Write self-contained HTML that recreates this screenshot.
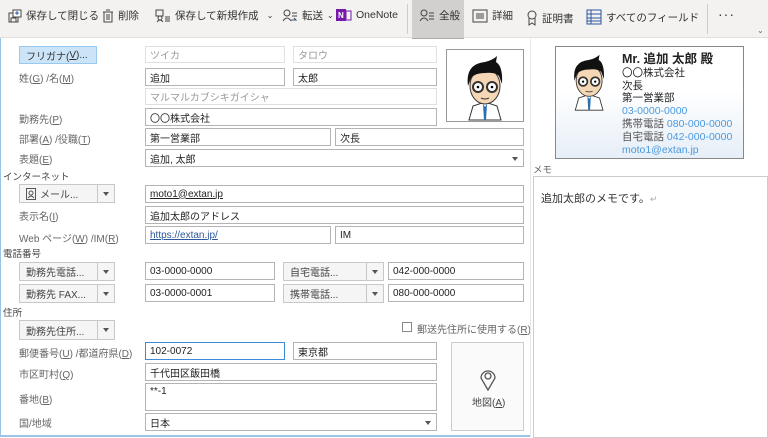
<!DOCTYPE html>
<html><head><meta charset="utf-8">
<style>
*{box-sizing:border-box;margin:0;padding:0}
body{width:768px;height:437px;overflow:hidden;background:#fff;font-family:"Liberation Sans","Noto Sans CJK JP",sans-serif;font-size:10px;color:#222;position:relative}
.a{position:absolute;white-space:nowrap}
.tb{position:absolute;left:0;top:0;width:768px;height:38px;background:#f3f2f1;border-bottom:1px solid #e1dfdd}
.ti{position:absolute;top:8px;font-size:10.5px;color:#333;display:flex;align-items:center;gap:4px}
.lab{position:absolute;color:#666;font-size:10px;white-space:nowrap}
.f{position:absolute;border:1px solid #b4b4b4;background:#fff;font-size:10px;padding:0 4px;display:flex;align-items:center;white-space:nowrap;color:#222}
.fg{border-color:#e0e0e0;color:#999}
.btn{position:absolute;border:1px solid #c8c8c8;background:#f5f5f5;font-size:10px;color:#444;padding:0 6px;display:flex;align-items:center}
.btn .sep{position:absolute;left:77px;top:0;bottom:0;border-left:1px solid #c8c8c8}
.dd{position:absolute;right:5px;top:7px;border-left:3px solid transparent;border-right:3px solid transparent;border-top:4px solid #555}
.lk{color:#2b579a;text-decoration:underline}
.u{text-decoration:underline}
.card div{position:absolute;left:66px;white-space:nowrap;font-size:10.5px;line-height:12px}
.bl{color:#4a9ae0}
</style></head><body>
<div style="position:absolute;left:0;top:0;width:1px;height:437px;background:#9cc3e8"></div>
<div style="position:absolute;left:0;top:435px;width:530px;height:2px;background:#9cc3e8"></div>
<div class="tb">
 <div style="position:absolute;left:412px;top:0;width:52px;height:39px;background:#d2d0ce;border-bottom:1px solid #aaa"></div>
 <div class="ti" style="left:8px"><svg width="14" height="14"><rect x="1" y="4" width="9" height="9" fill="none" stroke="#444"/><rect x="3" y="9" width="5" height="4" fill="none" stroke="#444"/><rect x="5" y="1" width="8" height="7" fill="#fff" stroke="#444"/><path d="M7 4h4M9 2v4" stroke="#2b579a"/></svg>保存して閉じる</div>
 <div class="ti" style="left:102px"><svg width="12" height="14"><rect x="2" y="3" width="8" height="10" fill="none" stroke="#444"/><path d="M1 3h10M4 1h4M5 5v6M7 5v6" stroke="#444"/></svg>削除</div>
 <div class="ti" style="left:155px"><svg width="16" height="14"><rect x="1" y="1" width="7" height="6" fill="none" stroke="#444"/><circle cx="5" cy="9" r="2" fill="none" stroke="#444"/><path d="M2 13q3-4 6 0M10 8h5M10 10h5M10 12h5" stroke="#444" fill="none"/></svg>保存して新規作成 <span style="font-size:8px;margin-left:4px">⌄</span></div>
 <div class="ti" style="left:282px"><svg width="16" height="14"><circle cx="5" cy="4" r="3" fill="none" stroke="#444"/><path d="M1 12q4-6 8 0M10 4h5M10 7h5M9 11h5l-2-2" stroke="#444" fill="none"/><path d="M9 11h5" stroke="#2b579a"/></svg>転送 <span style="font-size:8px">⌄</span></div>
 <div class="ti" style="left:336px"><svg width="16" height="14"><rect x="0" y="1" width="10" height="12" fill="#7719aa"/><text x="2" y="10" font-size="8" fill="#fff" font-family="Liberation Sans" font-weight="bold">N</text><rect x="10" y="3" width="5" height="9" fill="none" stroke="#7719aa"/></svg>OneNote</div>
 <div style="position:absolute;left:407px;top:4px;width:1px;height:30px;background:#ccc"></div>
 <div class="ti" style="left:419px"><svg width="16" height="14"><circle cx="5" cy="4" r="3" fill="none" stroke="#444"/><path d="M1 12q4-6 8 0M10 4h5M10 7h5M10 10h5" stroke="#444" fill="none"/></svg>全般</div>
 <div class="ti" style="left:472px"><svg width="16" height="14"><rect x="1" y="1" width="14" height="12" fill="none" stroke="#444"/><path d="M4 5h8M4 7h8M4 9h8" stroke="#444"/></svg>詳細</div>
 <div class="ti" style="left:526px;top:10px"><svg width="12" height="16"><circle cx="6" cy="5" r="4" fill="none" stroke="#444"/><path d="M3 8v7l3-2 3 2V8" fill="none" stroke="#444"/></svg>証明書</div>
 <div class="ti" style="left:586px;top:9px"><svg width="16" height="16"><rect x="1" y="1" width="14" height="14" fill="none" stroke="#2b579a"/><path d="M5 1v14M1 5h14M1 9h14M1 12h14" stroke="#2b579a"/></svg>すべてのフィールド</div>
 <div style="position:absolute;left:707px;top:4px;width:1px;height:30px;background:#ccc"></div>
 <div class="ti" style="left:718px;top:6px;font-size:14px;letter-spacing:1px">···</div>
 <div class="a" style="left:757px;top:26px;font-size:8px;color:#666">⌄</div>
</div>

<div class="btn" style="left:19px;top:46px;width:78px;height:18px;background:#cce4f7;border-color:#99c9ef;color:#333">フリガナ(<span class="u">V</span>)...</div>
<div class="f fg" style="left:145px;top:46px;width:140px;height:17px">ツイカ</div>
<div class="f fg" style="left:293px;top:46px;width:144px;height:17px">タロウ</div>
<div class="lab" style="left:19px;top:70px">姓(<span class="u">G</span>) /名(<span class="u">M</span>)</div>
<div class="f" style="left:145px;top:68px;width:140px;height:18px">追加</div>
<div class="f" style="left:293px;top:68px;width:144px;height:18px">太郎</div>
<div class="f fg" style="left:145px;top:88px;width:292px;height:17px">マルマルカブシキガイシャ</div>
<div class="lab" style="left:19px;top:111px">勤務先(<span class="u">P</span>)</div>
<div class="f" style="left:145px;top:108px;width:292px;height:18px">〇〇株式会社</div>
<div style="position:absolute;left:446px;top:49px;width:78px;height:73px;border:1px solid #999;background:#fff">
<svg width="76" height="71" viewBox="0 0 76 71"><path d="M22 70l4-14 12-4 12 4 4 14z" fill="#fff" stroke="#333"/><path d="M36 54l2 3 2-3-1 16h-2z" fill="#2a6fb0"/><ellipse cx="38" cy="36" rx="15" ry="18" fill="#f6d7b5" stroke="#333"/><path d="M21 36q-3-22 17-24 8-2 12-6l-1 6q7 4 6 22l-3-8q-4-4-14-3-10 0-14 5z" fill="#111"/><circle cx="31" cy="37" r="5" fill="#fff" stroke="#333" stroke-width="2"/><circle cx="45" cy="37" r="5" fill="#fff" stroke="#333" stroke-width="2"/><circle cx="31" cy="37" r="1.3"/><circle cx="45" cy="37" r="1.3"/><path d="M34 48q4 2 8 0" stroke="#333" fill="none"/></svg></div>
<div class="lab" style="left:19px;top:131px">部署(<span class="u">A</span>) /役職(<span class="u">T</span>)</div>
<div class="f" style="left:145px;top:128px;width:186px;height:18px">第一営業部</div>
<div class="f" style="left:335px;top:128px;width:189px;height:18px">次長</div>
<div class="lab" style="left:19px;top:151px">表題(<span class="u">E</span>)</div>
<div class="f" style="left:145px;top:149px;width:379px;height:18px">追加, 太郎<span class="dd"></span></div>
<div class="lab" style="left:3px;top:169px;font-size:9.5px;color:#444">インターネット</div>
<div class="btn" style="left:19px;top:184px;width:96px;height:19px"><svg width="10" height="12" style="margin-right:4px"><rect x="0.5" y="0.5" width="9" height="11" fill="none" stroke="#555"/><circle cx="5" cy="5" r="2" fill="none" stroke="#555"/><path d="M2 10q3-4 6 0" fill="none" stroke="#555"/></svg>メール...<span class="sep"></span><span class="dd"></span></div>
<div class="f" style="left:145px;top:185px;width:379px;height:18px"><span class="u">moto1@extan.jp</span></div>
<div class="lab" style="left:19px;top:208px">表示名(<span class="u">I</span>)</div>
<div class="f" style="left:145px;top:206px;width:379px;height:18px">追加太郎のアドレス</div>
<div class="lab" style="left:19px;top:230px">Web ページ(<span class="u">W</span>) /IM(<span class="u">R</span>)</div>
<div class="f" style="left:145px;top:226px;width:186px;height:18px"><span class="lk">https://extan.jp/</span></div>
<div class="f" style="left:335px;top:226px;width:189px;height:18px">IM</div>
<div class="lab" style="left:3px;top:246px;font-size:9.5px;color:#444">電話番号</div>
<div class="btn" style="left:19px;top:262px;width:96px;height:19px">勤務先電話...<span class="sep"></span><span class="dd"></span></div>
<div class="f" style="left:145px;top:262px;width:130px;height:18px">03-0000-0000</div>
<div class="btn" style="left:283px;top:262px;width:101px;height:19px">自宅電話...<span class="sep" style="left:82px"></span><span class="dd"></span></div>
<div class="f" style="left:388px;top:262px;width:136px;height:18px">042-000-0000</div>
<div class="btn" style="left:19px;top:284px;width:96px;height:19px">勤務先 FAX...<span class="sep"></span><span class="dd"></span></div>
<div class="f" style="left:145px;top:284px;width:130px;height:18px">03-0000-0001</div>
<div class="btn" style="left:283px;top:284px;width:101px;height:19px">携帯電話...<span class="sep" style="left:82px"></span><span class="dd"></span></div>
<div class="f" style="left:388px;top:284px;width:136px;height:18px">080-000-0000</div>
<div class="lab" style="left:3px;top:305px;font-size:9.5px;color:#444">住所</div>
<div class="btn" style="left:19px;top:320px;width:96px;height:20px">勤務先住所...<span class="sep"></span><span class="dd"></span></div>
<div style="position:absolute;left:402px;top:322px;width:10px;height:10px;border:1px solid #888;background:#fff"></div>
<div class="lab" style="left:417px;top:321px">郵送先住所に使用する(<span class="u">R</span>)</div>
<div class="lab" style="left:19px;top:345px">郵便番号(<span class="u">U</span>) /都道府県(<span class="u">D</span>)</div>
<div class="f" style="left:145px;top:342px;width:140px;height:18px;border-color:#3c8bd6">102-0072</div>
<div class="f" style="left:293px;top:342px;width:144px;height:18px">東京都</div>
<div class="lab" style="left:19px;top:366px">市区町村(<span class="u">Q</span>)</div>
<div class="f" style="left:145px;top:363px;width:292px;height:18px">千代田区飯田橋</div>
<div class="lab" style="left:19px;top:391px">番地(<span class="u">B</span>)</div>
<div class="f" style="left:145px;top:383px;width:292px;height:28px;align-items:flex-start;padding-top:2px">**-1</div>
<div class="lab" style="left:19px;top:415px">国/地域</div>
<div class="f" style="left:145px;top:413px;width:292px;height:18px">日本<span class="dd"></span></div>
<div style="position:absolute;left:451px;top:342px;width:73px;height:89px;border:1px solid #ccc;background:#fafafa">
<svg style="position:absolute;left:27px;top:24px" width="18" height="24"><path d="M9 23L2 11a7 7 0 1 1 14 0z" fill="none" stroke="#555" stroke-width="1.3"/><circle cx="9" cy="9" r="3" fill="none" stroke="#555" stroke-width="1.3"/></svg>
<div class="lab" style="left:20px;top:51px;color:#444">地図(<span class="u">A</span>)</div></div>

<div style="position:absolute;left:530px;top:39px;width:1px;height:398px;background:#e6e6e6"></div>
<div class="card" style="position:absolute;left:555px;top:46px;width:189px;height:113px;border:1px solid #888;background:linear-gradient(#fff 40%,#e6eef7)">
<svg style="position:absolute;left:6px;top:6px" width="56" height="58" viewBox="18 4 42 67"><path d="M22 70l4-14 12-4 12 4 4 14z" fill="#fff" stroke="#333"/><path d="M36 54l2 3 2-3-1 16h-2z" fill="#2a6fb0"/><ellipse cx="38" cy="36" rx="15" ry="18" fill="#f6d7b5" stroke="#333"/><path d="M21 36q-3-22 17-24 8-2 12-6l-1 6q7 4 6 22l-3-8q-4-4-14-3-10 0-14 5z" fill="#111"/><circle cx="31" cy="37" r="5" fill="#fff" stroke="#333" stroke-width="2"/><circle cx="45" cy="37" r="5" fill="#fff" stroke="#333" stroke-width="2"/><circle cx="31" cy="37" r="1.3"/><circle cx="45" cy="37" r="1.3"/><path d="M34 48q4 2 8 0" stroke="#333" fill="none"/></svg>
<div style="top:5px;font-weight:bold;font-size:12.5px;line-height:14px">Mr. 追加 太郎 殿</div>
<div style="top:20px">〇〇株式会社</div>
<div style="top:33px">次長</div>
<div style="top:45px">第一営業部</div>
<div class="bl" style="top:58px">03-0000-0000</div>
<div style="top:71px;color:#555">携帯電話 <span class="bl">080-000-0000</span></div>
<div style="top:84px;color:#555">自宅電話 <span class="bl">042-000-0000</span></div>
<div class="bl" style="top:97px">moto1@extan.jp</div>
</div>
<div class="lab" style="left:533px;top:162px;font-size:9.5px">メモ</div>
<div style="position:absolute;left:533px;top:176px;width:235px;height:262px;border:1px solid #ccc;background:#fff"></div>
<div class="a" style="left:541px;top:190px;font-size:11px;color:#333">追加太郎のメモです。<span style="color:#aaa;font-size:9px">↵</span></div>
</body></html>
